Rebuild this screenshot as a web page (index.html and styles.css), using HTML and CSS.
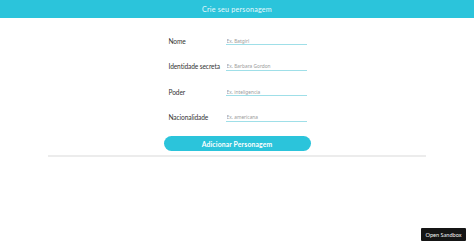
FILE: index.html
```html
<!DOCTYPE html>
<html lang="pt">
<head>
<meta charset="utf-8">
<title>Crie seu personagem</title>
<link rel="stylesheet" href="styles.css">
</head>
<body>
<header class="topbar">Crie seu personagem</header>
<main class="page">
  <form class="form">
    <div class="fields">
      <label class="label" for="nome">Nome</label>
      <input class="input" id="nome" placeholder="Ex. Batgirl">
      <label class="label" for="ident">Identidade secreta</label>
      <input class="input" id="ident" placeholder="Ex. Barbara Gordon">
      <label class="label" for="poder">Poder</label>
      <input class="input" id="poder" placeholder="Ex. inteligencia">
      <label class="label" for="nac">Nacionalidade</label>
      <input class="input" id="nac" placeholder="Ex. americana">
    </div>
    <button type="button" class="submit">Adicionar Personagem</button>
  </form>
  <hr class="divider">
</main>
<a class="sandbox">Open Sandbox</a>
</body>
</html>
```
FILE: styles.css
```css
* { box-sizing: border-box; }
html, body { margin: 0; padding: 0; background: #fff; }
body {
  font-family: "Lato", "Noto Sans", sans-serif;
  color: #333;
  width: 474px;
  height: 248px;
  overflow: hidden;
}
.topbar {
  height: 18px;
  background: #2bc4db;
  color: #e4f8fb;
  font-size: 7.2px;
  display: flex;
  align-items: center;
  justify-content: center;
  letter-spacing: 0.2px;
}
.page {
  display: flex;
  flex-direction: column;
  align-items: center;
}
.form {
  display: flex;
  flex-direction: column;
  align-items: center;
  padding-top: 11px;
}
.fields {
  display: grid;
  grid-template-columns: 57px 81px;
  grid-auto-rows: 25.5px;
  align-items: start;
  margin-left: 1px;
}
.label {
  font-size: 6.6px;
  line-height: 8px;
  padding-top: 7.5px;
  color: #333;
  letter-spacing: -0.1px;
}
.input {
  margin-top: 8px;
  width: 81px;
  height: 8px;
  border: 0;
  border-bottom: 1px solid #9fdfe8;
  padding: 0 0 0 1px;
  font-family: "Noto Sans", sans-serif;
  font-size: 4.8px;
  line-height: 7px;
  color: #444;
  background: transparent;
  outline: none;
}
.input::placeholder { color: #9a9a9a; font-style: normal; }
.submit {
  margin-top: 5px;
  width: 147px;
  height: 15px;
  border: 0;
  border-radius: 8px;
  background: #2bc4db;
  color: #fff;
  font-family: inherit;
  font-weight: 700;
  font-size: 6.8px;
  letter-spacing: 0.15px;
  padding: 0;
  cursor: pointer;
}
.divider {
  margin: 4px 0 0 0;
  width: 378px;
  height: 2px;
  border: 0;
  background: #ececec;
}
.sandbox {
  position: fixed;
  right: 8px;
  bottom: 7px;
  width: 45px;
  height: 13px;
  background: #151515;
  color: #f2f2f2;
  font-size: 5.6px;
  display: flex;
  align-items: center;
  justify-content: center;
  border-radius: 1px;
}
```
